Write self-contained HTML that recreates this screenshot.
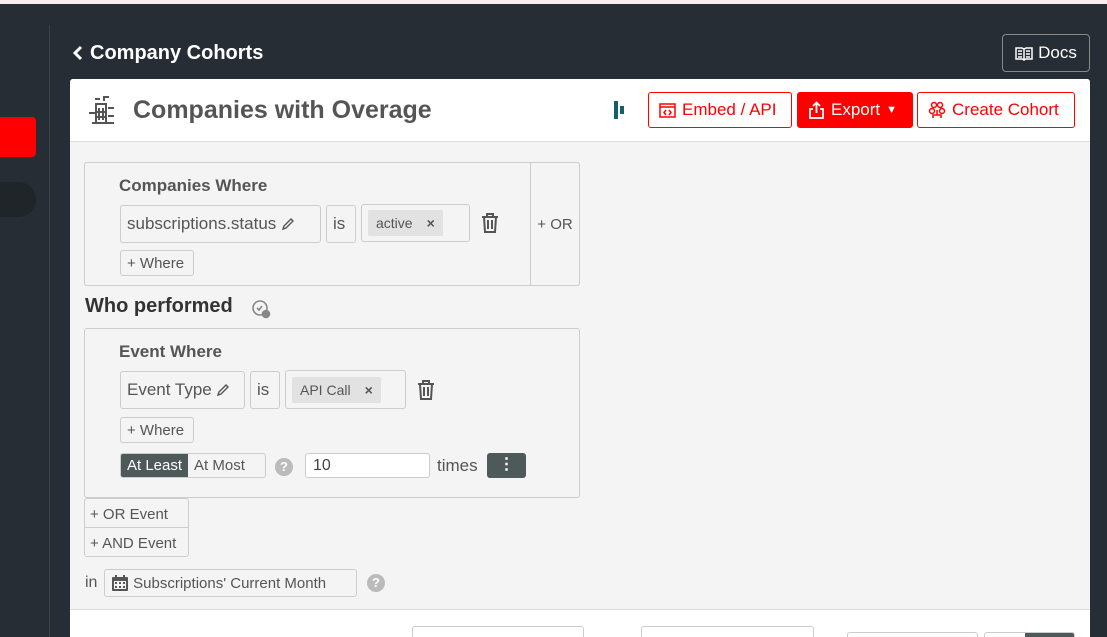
<!DOCTYPE html>
<html><head><style>
*{box-sizing:border-box;margin:0;padding:0}
body{width:1107px;height:637px;overflow:hidden;background:#262d35;font-family:"Liberation Sans",sans-serif;position:relative;color:#444}
.a{position:absolute}
.box{position:absolute;border:1px solid #ccc;border-radius:3px;background:#f4f4f4}
.btn{position:absolute;border:1px solid #ccc;border-radius:3px;background:#f4f4f4;font-size:15px;color:#555;display:flex;align-items:center;padding-left:6px}
.inp{position:absolute;border:1px solid #ccc;border-radius:3px;background:#f4f4f4;font-size:17px;color:#555;display:flex;align-items:center;padding-left:6px}
.tag{background:#e2e2e2;border-radius:2px;font-size:14px;color:#555;padding:5px 8px;display:flex;gap:14px}
.rb{position:absolute;height:36px;border:1px solid #f00;border-radius:3px;color:#f00;font-size:17px;display:flex;align-items:center;gap:6px;padding:0 10px;background:#fff}
</style></head><body>
<div class="a" style="left:0;top:0;width:1107px;height:4px;background:#fbeeee"></div>
<div class="a" style="left:49px;top:25px;width:1px;height:612px;background:#3a424b"></div>
<div class="a" style="left:0;top:117px;width:36px;height:40px;background:#f00;border-radius:0 4px 4px 0"></div>
<div class="a" style="left:0;top:182px;width:36px;height:35px;background:#1f2528;border-radius:0 18px 18px 0"></div>
<svg class="a" style="left:72px;top:45px" width="12" height="16" viewBox="0 0 12 16" fill="none" stroke="#fff" stroke-width="3"><path d="M9 2L3 8l6 6"/></svg>
<div class="a" style="left:90px;top:42px;color:#fff;font-size:20px;font-weight:bold">Company Cohorts</div>
<div class="a" style="left:1002px;top:34px;width:88px;height:38px;border:1px solid #888;border-radius:4px;color:#fff;font-size:17px;display:flex;align-items:center;justify-content:center;gap:5px"><svg width="18" height="15" viewBox="0 0 18 15" fill="none" stroke="#fff" stroke-width="1.5"><path d="M1 2h6l2 1 2-1h6v11h-6l-2 1-2-1H1z M9 3v11 M3 5h4M3 8h4M3 11h4M11 5h4M11 8h4M11 11h4"/></svg>Docs</div>

<div class="a" style="left:70px;top:79px;width:1020px;height:558px;background:#f4f4f4;border-radius:3px 3px 0 0;overflow:hidden">
 <div class="a" style="left:0;top:0;width:1020px;height:63px;background:#fff;border-bottom:1px solid #ddd"></div>
 <svg class="a" style="left:16px;top:14px" width="34" height="34" viewBox="0 0 34 34" fill="none" stroke="#555" stroke-width="2"><rect x="10" y="11" width="10" height="19"/><path d="M6 30h22M13 15v12M17 15v12M10 19h10M10 24h10M3 20h6M22 15h6M22 23h6M9 6h5M18 8V4h5"/></svg>
 <div class="a" style="left:63px;top:17px;font-size:25px;font-weight:bold;color:#555">Companies with Overage</div>
 <div class="a" style="left:544px;top:22px;width:4px;height:18px;background:#13606a"></div>
 <div class="a" style="left:550px;top:27px;width:4px;height:8px;background:#13606a"></div>
 <div class="rb" style="left:578px;top:13px;width:144px"><svg width="17" height="15" viewBox="0 0 17 15" fill="none" stroke="#f00" stroke-width="1.5"><rect x="1" y="1" width="15" height="13"/><path d="M1 4h15M7 7l-2 2.5 2 2.5M10 7l2 2.5-2 2.5"/></svg>Embed / API</div>
 <div class="rb" style="left:727px;top:13px;width:116px;background:#f00;color:#fff"><svg width="17" height="18" viewBox="0 0 17 18" fill="none" stroke="#fff" stroke-width="1.8"><path d="M8.5 12V2M5 5l3.5-3.5L12 5M5 8H2v9h13V8h-3"/></svg>Export <span style="font-size:11px">&#x25BC;</span></div>
 <div class="rb" style="left:847px;top:13px;width:158px"><svg width="18" height="18" viewBox="0 0 18 18" fill="none" stroke="#f00" stroke-width="1.5"><circle cx="6" cy="4" r="2.5"/><circle cx="12" cy="4" r="2.5"/><circle cx="4" cy="10" r="2.5"/><circle cx="14" cy="10" r="2.5"/><path d="M5 17v-3h8v3M9 9v5"/></svg>Create Cohort</div>

 <div class="box" style="left:14px;top:83px;width:496px;height:124px"></div>
 <div class="box" style="left:460px;top:83px;width:50px;height:124px;border-radius:0 3px 3px 0;font-size:15px;color:#555;display:flex;align-items:center;justify-content:center">+ OR</div>
 <div class="a" style="left:49px;top:97px;font-size:17px;font-weight:bold;color:#555">Companies Where</div>
 <div class="inp" style="left:50px;top:126px;width:201px;height:38px">subscriptions.status&nbsp;<svg width="14" height="14" viewBox="0 0 14 14" fill="none" stroke="#555" stroke-width="1.4"><path d="M2 12l1-3 7-7 2 2-7 7z"/></svg></div>
 <div class="inp" style="left:256px;top:126px;width:30px;height:38px">is</div>
 <div class="inp" style="left:291px;top:125px;width:109px;height:38px"><span class="tag">active <b>×</b></span></div>
 <svg class="a" style="left:411px;top:134px" width="18" height="20" viewBox="0 0 18 20" fill="none" stroke="#555" stroke-width="2"><path d="M1 4h16M6 4V1h6v3M3 4l1 15h10l1-15M7 7v9M11 7v9"/></svg>
 <div class="btn" style="left:50px;top:171px;width:74px;height:26px">+ Where</div>

 <div class="a" style="left:15px;top:216px;font-size:20px;font-weight:bold;color:#333">Who performed</div>
 <svg class="a" style="left:181px;top:220px" width="20" height="20" viewBox="0 0 20 20" fill="none" stroke="#888" stroke-width="1.6"><circle cx="9" cy="9" r="7"/><path d="M6 9l2 2 3-4"/><circle cx="15" cy="15" r="3.5" fill="#888"/></svg>
 <div class="box" style="left:14px;top:249px;width:496px;height:170px"></div>
 <div class="a" style="left:49px;top:263px;font-size:17px;font-weight:bold;color:#555">Event Where</div>
 <div class="inp" style="left:50px;top:292px;width:125px;height:38px">Event Type&nbsp;<svg width="14" height="14" viewBox="0 0 14 14" fill="none" stroke="#555" stroke-width="1.4"><path d="M2 12l1-3 7-7 2 2-7 7z"/></svg></div>
 <div class="inp" style="left:180px;top:292px;width:30px;height:38px">is</div>
 <div class="inp" style="left:215px;top:291px;width:121px;height:39px"><span class="tag">API Call <b>×</b></span></div>
 <svg class="a" style="left:347px;top:301px" width="18" height="20" viewBox="0 0 18 20" fill="none" stroke="#555" stroke-width="2"><path d="M1 4h16M6 4V1h6v3M3 4l1 15h10l1-15M7 7v9M11 7v9"/></svg>
 <div class="btn" style="left:50px;top:338px;width:74px;height:26px">+ Where</div>
 <div class="a" style="left:50px;top:374px;width:146px;height:25px;border:1px solid #ccc;border-radius:3px;display:flex;font-size:15px;overflow:hidden">
  <div style="background:#4e5959;color:#fff;padding:3px 6px">At Least</div><div style="color:#555;padding:3px 6px">At Most</div></div>
 <div class="a" style="left:205px;top:379px;width:18px;height:18px;border-radius:50%;background:#bbb;color:#fff;font-size:13px;font-weight:bold;text-align:center;line-height:18px">?</div>
 <div class="a" style="left:235px;top:374px;width:125px;height:25px;border:1px solid #ccc;border-radius:3px;background:#fff;font-size:16px;padding:3px 7px;color:#444">10</div>
 <div class="a" style="left:367px;top:377px;font-size:17px;color:#555">times</div>
 <div class="a" style="left:417px;top:374px;width:39px;height:25px;background:#4e5959;border-radius:3px;color:#fff;text-align:center;font-weight:bold;line-height:24px">&#x22EE;</div>

 <div class="box" style="left:14px;top:419px;width:105px;height:59px"></div>
 <div class="a" style="left:14px;top:448px;width:105px;height:1px;background:#ccc"></div>
 <div class="a" style="left:20px;top:427px;font-size:15px;color:#555">+ OR Event</div>
 <div class="a" style="left:20px;top:456px;font-size:15px;color:#555">+ AND Event</div>
 <div class="a" style="left:15px;top:495px;font-size:16px;color:#555">in</div>
 <div class="btn" style="left:34px;top:490px;width:253px;height:28px"><svg width="18" height="18" viewBox="0 0 18 18" fill="#555"><rect x="1" y="3" width="16" height="14" rx="1"/><rect x="3" y="7" width="12" height="8" fill="#f4f4f4"/><rect x="4" y="1" width="2" height="4"/><rect x="12" y="1" width="2" height="4"/><path d="M4 8h2v2H4zM8 8h2v2H8zM12 8h2v2h-2zM4 12h2v2H4zM8 12h2v2H8zM12 12h2v2h-2z"/></svg>&nbsp;Subscriptions' Current Month</div>
 <div class="a" style="left:297px;top:495px;width:18px;height:18px;border-radius:50%;background:#bbb;color:#fff;font-size:13px;font-weight:bold;text-align:center;line-height:18px">?</div>

 <div class="a" style="left:0;top:530px;width:1020px;height:30px;background:#fff;border-top:1px solid #ddd"></div>
 <div class="a" style="left:342px;top:547px;width:172px;height:20px;border:1px solid #ccc;border-radius:3px"></div>
 <div class="a" style="left:571px;top:547px;width:173px;height:20px;border:1px solid #ccc;border-radius:3px"></div>
 <div class="a" style="left:777px;top:553px;width:131px;height:20px;border:1px solid #ccc;border-radius:3px"></div>
 <div class="a" style="left:914px;top:553px;width:91px;height:20px;border:1px solid #ccc;border-radius:3px;overflow:hidden"><div style="margin-left:40px;height:20px;background:#4e5959"></div></div>
</div>
</body></html>
